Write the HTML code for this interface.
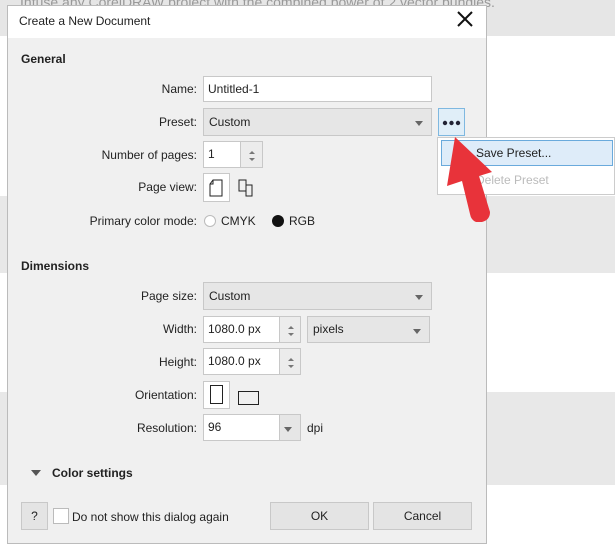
<!DOCTYPE html><html><head><style>
*{box-sizing:border-box;margin:0;padding:0}
body{width:615px;height:547px;position:relative;overflow:hidden;background:#fff;font-family:"Liberation Sans",sans-serif;font-size:12px;color:#222}
.a{position:absolute}
.lbl{position:absolute;text-align:right;width:190px;left:7px}
.in{position:absolute;background:#fff;border:1px solid #c8c8c8;padding:5px 4px;font-size:12px}
.sel{position:absolute;background:#e6e6e6;border:1px solid #c8c8c8;padding:6px 5px;font-size:12px}
.sel:after{content:"";position:absolute;right:8px;top:12px;border:4px solid transparent;border-top:5px solid #666}
.sp{position:absolute;background:#ececec;border:1px solid #c8c8c8}
.sp:before{content:"";position:absolute;left:8px;top:6px;border:3px solid transparent;border-bottom:3px solid #777}
.sp:after{content:"";position:absolute;left:8px;top:16px;border:3px solid transparent;border-top:3px solid #777}
.btn{position:absolute;background:#e4e4e4;border:1px solid #c8c8c8;text-align:center;line-height:26px;font-size:12px}
</style></head><body>
<div class="a" style="left:0;top:0;width:615px;height:36px;background:#e6e6e6"></div>
<div class="a" style="left:0;top:196px;width:615px;height:77px;background:#e8e8e8"></div>
<div class="a" style="left:0;top:392px;width:615px;height:93px;background:#e8e8e8"></div>
<div class="a" style="left:20px;top:-6px;color:#999;font-size:14px">Infuse any CorelDRAW project with the combined power of 2 vector bundles.</div>
<div class="a" style="left:7px;top:5px;width:480px;height:539px;background:#f0f0f0;border:1px solid #bbb"></div>
<div class="a" style="left:8px;top:6px;width:478px;height:32px;background:#fff"></div>
<div class="a" style="left:19px;top:14px;font-size:12px">Create a New Document</div>
<svg class="a" style="left:456px;top:10px" width="18" height="18"><path d="M2 2L16 16M16 2L2 16" stroke="#111" stroke-width="2"/></svg>
<div class="a" style="left:21px;top:52px;font-weight:bold">General</div>
<div class="lbl" style="top:82px">Name:</div><div class="in" style="left:203px;top:76px;width:229px;height:26px">Untitled-1</div>
<div class="lbl" style="top:115px">Preset:</div><div class="sel" style="left:203px;top:108px;width:229px;height:28px">Custom</div>
<div class="a" style="left:438px;top:108px;width:27px;height:28px;border:1px solid #7fb8e0;background:#e0eef8"></div>
<svg class="a" style="left:438px;top:108px" width="27" height="28"><circle cx="7" cy="15" r="2.2" fill="#223"/><circle cx="13.5" cy="15" r="2.2" fill="#223"/><circle cx="20" cy="15" r="2.2" fill="#223"/></svg>
<div class="lbl" style="top:148px">Number of pages:</div><div class="in" style="left:203px;top:141px;width:38px;height:27px">1</div><div class="sp" style="left:240px;top:141px;width:23px;height:27px"></div>
<div class="lbl" style="top:180px">Page view:</div>
<div class="a" style="left:203px;top:173px;width:27px;height:29px;border:1px solid #c8c8c8;background:#fff"></div>
<svg class="a" style="left:203px;top:173px" width="60" height="30"><path d="M10 7h9v16h-12v-12z M7 11h3v-4" fill="none" stroke="#222"/><path d="M36 7h7v11h-7z M43 12h6v11h-6z" fill="none" stroke="#222"/></svg>
<div class="lbl" style="top:214px">Primary color mode:</div>
<div class="a" style="left:204px;top:215px;width:12px;height:12px;border:1px solid #bbb;border-radius:50%;background:#fff"></div>
<div class="a" style="left:221px;top:214px">CMYK</div>
<div class="a" style="left:272px;top:215px;width:12px;height:12px;border-radius:50%;background:#111"></div>
<div class="a" style="left:289px;top:214px">RGB</div>
<div class="a" style="left:21px;top:259px;font-weight:bold">Dimensions</div>
<div class="lbl" style="top:289px">Page size:</div><div class="sel" style="left:203px;top:282px;width:229px;height:28px">Custom</div>
<div class="lbl" style="top:322px">Width:</div><div class="in" style="left:203px;top:316px;width:77px;height:27px">1080.0 px</div><div class="sp" style="left:279px;top:316px;width:22px;height:27px"></div>
<div class="sel" style="left:307px;top:316px;width:123px;height:27px;padding-top:5px">pixels</div>
<div class="lbl" style="top:355px">Height:</div><div class="in" style="left:203px;top:348px;width:77px;height:27px">1080.0 px</div><div class="sp" style="left:279px;top:348px;width:22px;height:27px"></div>
<div class="lbl" style="top:388px">Orientation:</div>
<div class="a" style="left:203px;top:381px;width:27px;height:28px;border:1px solid #c8c8c8;background:#fff"></div>
<div class="a" style="left:210px;top:385px;width:13px;height:19px;border:1px solid #222"></div>
<div class="a" style="left:238px;top:391px;width:21px;height:14px;border:1px solid #222"></div>
<div class="lbl" style="top:421px">Resolution:</div><div class="in" style="left:203px;top:414px;width:77px;height:27px">96</div>
<div class="sel" style="left:279px;top:414px;width:22px;height:27px"></div>
<div class="a" style="left:307px;top:421px">dpi</div>
<div class="a" style="left:31px;top:470px;border:5px solid transparent;border-top:6px solid #555"></div>
<div class="a" style="left:52px;top:466px;font-weight:bold">Color settings</div>
<div class="btn" style="left:21px;top:502px;width:27px;height:28px">?</div>
<div class="a" style="left:53px;top:508px;width:16px;height:16px;border:1px solid #bbb;background:#fff"></div>
<div class="a" style="left:72px;top:510px">Do not show this dialog again</div>
<div class="btn" style="left:270px;top:502px;width:99px;height:28px">OK</div>
<div class="btn" style="left:373px;top:502px;width:99px;height:28px">Cancel</div>
<div class="a" style="left:437px;top:137px;width:178px;height:58px;background:#fff;border:1px solid #ccc"></div>
<div class="a" style="left:441px;top:140px;width:172px;height:26px;background:#deecf9;border:1px solid #6aaadc"></div>
<div class="a" style="left:476px;top:146px">Save Preset...</div>
<div class="a" style="left:476px;top:173px;color:#bbb">Delete Preset</div>
<svg class="a" style="left:0;top:0" width="615" height="547"><path d="M455 137 L492 172 L479 176 L490 212 Q490 220 482 222 L476 222 Q471 220 470 214 L462 181 L447 186 Z" fill="#e8333a"/></svg>
</body></html>
